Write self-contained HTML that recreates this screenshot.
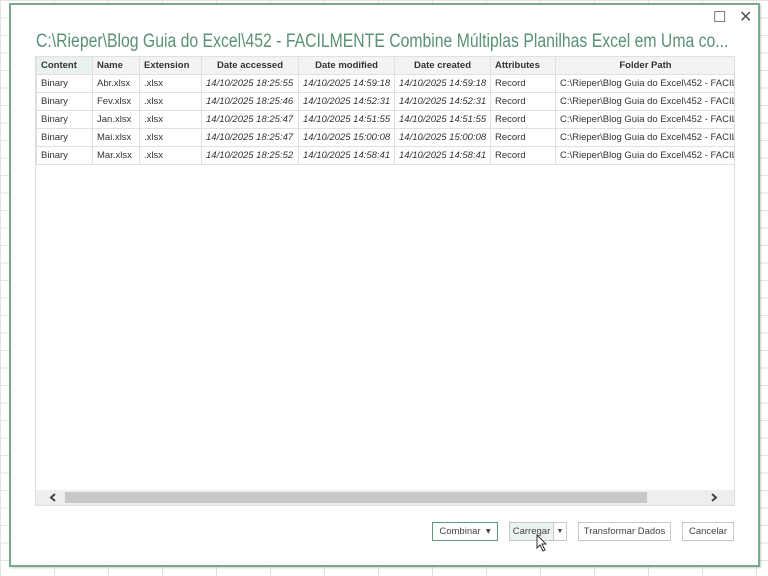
<!DOCTYPE html><html><head><style>
*{margin:0;padding:0;box-sizing:border-box}
body{width:768px;height:576px;position:relative;overflow:hidden;background:#fff;font-family:"Liberation Sans",sans-serif;
background-image:linear-gradient(#e2e2e2 1px,transparent 1px),linear-gradient(90deg,#e2e2e2 1px,transparent 1px);background-size:100% 17.5px,54px 100%}
.dlg{position:absolute;left:9px;top:3px;width:751px;height:564px;background:#fff;border:2px solid #7aa88e;box-shadow:1px 1px 2px rgba(0,0,0,.2);overflow:hidden}
.title{position:absolute;left:25px;top:26px;font-size:19px;color:#5a9174;white-space:nowrap;transform:scaleX(0.83);transform-origin:left top}
.tb{position:absolute;top:3px;font-size:15px;color:#555}
.grid{position:absolute;left:24px;top:51px;width:700px;height:450px;border:1px solid #ddd;border-top:none;overflow:hidden}
table{border-collapse:collapse;font-size:9.5px;color:#333;table-layout:fixed}
td,th{height:18px;border:1px solid #e0e0e0;padding:0 4px;white-space:nowrap;overflow:hidden;text-align:left}
th{background:#f3f3f3;font-weight:bold;color:#333}
th.c{text-align:center}
td.i{font-style:italic}
.sb{position:absolute;left:0;top:434px;width:698px;height:15px;background:#eeeeee}
.thumb{position:absolute;left:29px;top:2px;width:582px;height:11px;background:#c8c8c8}
.btn{position:absolute;top:522px;height:19px;border:1px solid #c8c8c8;font-size:9.5px;color:#444;text-align:center;line-height:17px;background:#fff}
</style></head><body>
<div class="dlg">
<div class="tb" style="left:702px">☐</div><div class="tb" style="left:728px;font-size:16px;top:2px">✕</div>
<div class="title">C:\Rieper\Blog Guia do Excel\452 - FACILMENTE Combine Múltiplas Planilhas Excel em Uma co...</div>
<div class="grid">
<table style="width:699px">
<colgroup><col style="width:56px"><col style="width:47px"><col style="width:62px"><col style="width:97px"><col style="width:96px"><col style="width:96px"><col style="width:65px"><col style="width:180px"></colgroup>
<tr><th style="background:#e9f2ec">Content</th><th>Name</th><th>Extension</th><th class="c">Date accessed</th><th class="c">Date modified</th><th class="c">Date created</th><th>Attributes</th><th class="c">Folder Path</th></tr>
<tr><td>Binary</td><td>Abr.xlsx</td><td>.xlsx</td><td class="i">14/10/2025 18:25:55</td><td class="i">14/10/2025 14:59:18</td><td class="i">14/10/2025 14:59:18</td><td>Record</td><td>C:\Rieper\Blog Guia do Excel\452 - FACILMENTE</td></tr>
<tr><td>Binary</td><td>Fev.xlsx</td><td>.xlsx</td><td class="i">14/10/2025 18:25:46</td><td class="i">14/10/2025 14:52:31</td><td class="i">14/10/2025 14:52:31</td><td>Record</td><td>C:\Rieper\Blog Guia do Excel\452 - FACILMENTE</td></tr>
<tr><td>Binary</td><td>Jan.xlsx</td><td>.xlsx</td><td class="i">14/10/2025 18:25:47</td><td class="i">14/10/2025 14:51:55</td><td class="i">14/10/2025 14:51:55</td><td>Record</td><td>C:\Rieper\Blog Guia do Excel\452 - FACILMENTE</td></tr>
<tr><td>Binary</td><td>Mai.xlsx</td><td>.xlsx</td><td class="i">14/10/2025 18:25:47</td><td class="i">14/10/2025 15:00:08</td><td class="i">14/10/2025 15:00:08</td><td>Record</td><td>C:\Rieper\Blog Guia do Excel\452 - FACILMENTE</td></tr>
<tr><td>Binary</td><td>Mar.xlsx</td><td>.xlsx</td><td class="i">14/10/2025 18:25:52</td><td class="i">14/10/2025 14:58:41</td><td class="i">14/10/2025 14:58:41</td><td>Record</td><td>C:\Rieper\Blog Guia do Excel\452 - FACILMENTE</td></tr>
</table>
<div class="sb"><div class="thumb"></div>
<svg style="position:absolute;left:13px;top:3px" width="8" height="9"><path d="M6 1L2 4.5L6 8" stroke="#444" stroke-width="2" fill="none"/></svg>
<svg style="position:absolute;left:674px;top:3px" width="8" height="9"><path d="M2 1L6 4.5L2 8" stroke="#444" stroke-width="2" fill="none"/></svg>
</div>
</div>
</div>
<div class="btn" style="left:432px;width:66px;border-color:#5e9c78">Combinar &nbsp;▾</div>
<div class="btn" style="left:509px;width:45px;background:#eaf3ee">Carregar</div>
<div class="btn" style="left:553px;width:14px;font-size:7px">▼</div>
<div class="btn" style="left:578px;width:93px">Transformar Dados</div>
<div class="btn" style="left:682px;width:52px">Cancelar</div>
<svg style="position:absolute;left:536px;top:534px" width="12" height="18"><path d="M1 1L1 14L4 11L7 17L9 16L6 10L10 10Z" fill="#fff" stroke="#333" stroke-width="1"/></svg>
</body></html>
